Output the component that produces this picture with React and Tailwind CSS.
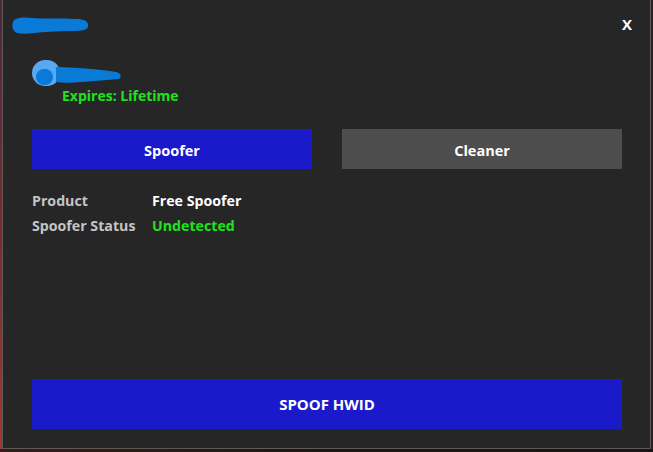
import React from "react";

const font = { fontFamily: '"Open Sans", "Noto Sans", sans-serif' };

// Hand-drawn marker stroke covering the window title
function TitleMark({ className }) {
  return (
    <svg className={className} viewBox="0 0 77 17" fill="none">
      <path
        d="M1 5 C3 0, 12 0, 20 1 C32 2, 50 1, 64 2 C72 2, 77 4, 76 10 C75 14, 66 14, 56 14 C44 14, 32 15, 22 16 C14 17, 6 17, 3 15 C0 12, 0 8, 1 5 Z"
        fill="#0a7ad8"
      />
    </svg>
  );
}

// Marker stroke covering the user name
function NameMark({ className }) {
  return (
    <svg className={className} viewBox="0 0 66 16" fill="none">
      <path
        d="M0 0 C12 0, 24 1, 36 2 C46 3, 54 4, 60 5 C65 6, 66 10, 63 12 C52 13, 38 14, 26 15 C16 16, 6 16, 0 15 Z"
        fill="#0a7ad8"
      />
    </svg>
  );
}

export default function App() {
  return (
    <div
      className="w-[653px] h-[452px] bg-[#1c1616] flex flex-col overflow-hidden"
      style={font}
    >
      <div className="flex flex-1 min-h-0">
        <div className="w-[2px] bg-gradient-to-b from-[#4a2a3a] via-[#7a2a30] to-[#a03a30]" />
        <div className="relative flex-1 bg-[#262626] border-l border-r border-b border-[#5a5a5a] flex flex-col pl-[29px] pr-[28px] pb-[19px]">
          {/* title bar */}
          <div className="flex items-start justify-between h-[54px] -ml-[20px] -mr-[9px] pt-[17px]">
            <TitleMark className="w-[77px] h-[17px]" />
            <span className="text-white font-bold text-[15px] leading-none mr-[-1px]">X</span>
          </div>

          {/* user */}
          <div className="relative h-[54px]">
            <div className="absolute left-[0px] top-[6px] w-[28px] h-[26px] rounded-full bg-[#5aa8f2]">
              <div className="absolute left-[4px] top-[9px] w-[17px] h-[16px] rounded-full bg-[#0a7ad8]" />
            </div>
            <NameMark className="absolute left-[24px] top-[13px] w-[66px] h-[16px]" />
            <div className="absolute left-[30px] top-[35px] text-[14px] leading-none font-bold text-[#1fe21f]">
              Expires: Lifetime
            </div>
          </div>

          {/* tabs */}
          <div className="flex justify-between mt-[21px]">
            <button className="w-[280px] h-[40px] pt-[3px] bg-[#1a1acb] text-white font-bold text-[14.5px]">
              Spoofer
            </button>
            <button className="w-[280px] h-[40px] pt-[3px] bg-[#4d4d4d] text-white font-bold text-[14.5px]">
              Cleaner
            </button>
          </div>

          {/* product info */}
          <div className="grid grid-cols-[120px_1fr] gap-y-[5px] mt-[22px] text-[14.2px] font-bold leading-[20px]">
            <span className="text-[#c4c4c4]">Product</span>
            <span className="text-white">Free Spoofer</span>
            <span className="text-[#c4c4c4]">Spoofer Status</span>
            <span className="text-[#1fe21f]">Undetected</span>
          </div>

          <div className="flex-1" />

          <button className="h-[50px] w-full bg-[#1a1acb] text-white font-bold text-[15px]">
            SPOOF HWID
          </button>
        </div>
        <div className="w-[2px] bg-[#2a2226]" />
      </div>
      <div className="h-[3px] bg-gradient-to-r from-[#3a1a18] via-[#1e1614] to-[#1a1416]" />
    </div>
  );
}
